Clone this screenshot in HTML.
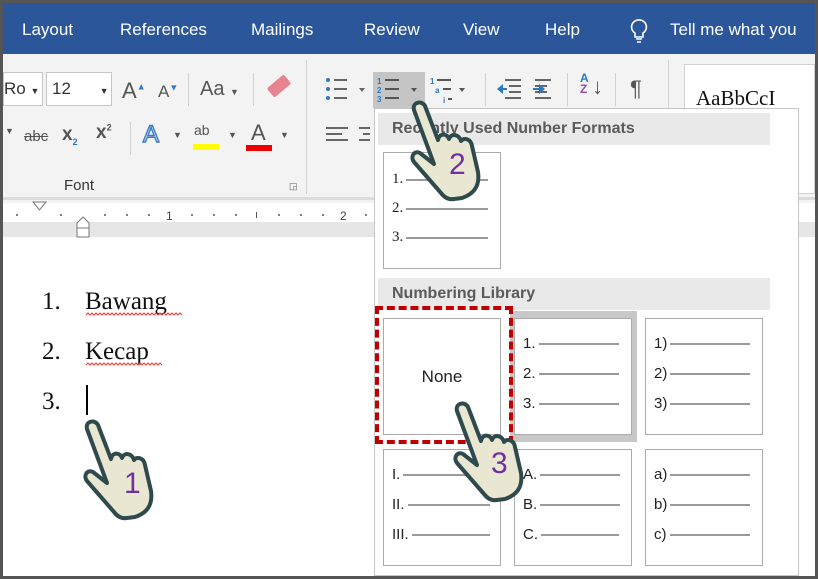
<!DOCTYPE html>
<html><head><meta charset="utf-8"><style>
*{margin:0;padding:0;box-sizing:border-box}
body{width:818px;height:579px;overflow:hidden;background:#555;position:relative;font-family:"Liberation Sans",sans-serif}
.a{position:absolute}
.tab{position:absolute;top:20px;color:#fff;font-size:17px}
.box{position:absolute;background:#fff;border:1px solid #ababab;width:118px;height:117px}
.row{position:absolute;left:8px;font-size:15px;color:#222;display:flex;align-items:center}
.row i{display:inline-block;height:2px;background:#9a9a9a;margin-left:3px}
.hdr{position:absolute;left:3px;width:392px;height:32px;background:#e9e9e9;color:#5a5a5a;font-weight:bold;font-size:16px;padding:7px 0 0 14px}
.g{color:#555;font-size:18px}
</style></head><body>
<div class="a" style="left:3px;top:3px;width:812px;height:573px;background:#f3f3f3"></div>
<div class="a" style="left:3px;top:3px;width:812px;height:51px;background:#2b579a"></div>
<div class="tab" style="left:22px">Layout</div>
<div class="tab" style="left:120px">References</div>
<div class="tab" style="left:251px">Mailings</div>
<div class="tab" style="left:364px">Review</div>
<div class="tab" style="left:463px">View</div>
<div class="tab" style="left:545px">Help</div>
<svg class="a" style="left:628px;top:18px" width="22" height="28"><path d="M11 2a7 7 0 0 0-4 13v4h8v-4a7 7 0 0 0-4-13zM8 21h6M9 24h4" stroke="#fff" stroke-width="1.6" fill="none"/></svg>
<div class="tab" style="left:670px">Tell me what you</div>

<!-- ribbon -->
<div class="a" style="left:3px;top:72px;width:40px;height:34px;background:#fff;border:1px solid #c6c6c6;font-size:17px;color:#333;padding:6px 0 0 0">Ro <span style="font-size:9px">▼</span></div>
<div class="a" style="left:46px;top:72px;width:66px;height:34px;background:#fff;border:1px solid #c6c6c6;font-size:17px;color:#333;padding:6px 0 0 5px">12 <span style="font-size:9px;margin-left:24px">▼</span></div>
<div class="a g" style="left:122px;top:78px;font-size:22px">A<sup style="font-size:9px;color:#2b79c2">▲</sup></div>
<div class="a g" style="left:158px;top:82px;font-size:17px">A<sup style="font-size:9px;color:#2b79c2">▼</sup></div>
<div class="a" style="left:188px;top:73px;width:1px;height:33px;background:#d0d0d0"></div>
<div class="a g" style="left:200px;top:78px;font-size:20px">Aa <span style="font-size:9px">▼</span></div>
<div class="a" style="left:253px;top:73px;width:1px;height:33px;background:#d0d0d0"></div>
<div class="a" style="left:268px;top:80px;width:22px;height:12px;background:#e8848f;transform:rotate(-40deg);border-radius:2px"></div>
<div class="a g" style="left:5px;top:126px;font-size:9px">▼</div>
<div class="a g" style="left:24px;top:128px;font-size:15px;text-decoration:line-through">abc</div>
<div class="a g" style="left:62px;top:124px;font-size:19px;font-weight:bold">x<sub style="font-size:9px;color:#2b79c2">2</sub></div>
<div class="a g" style="left:96px;top:122px;font-size:19px;font-weight:bold">x<sup style="font-size:9px">2</sup></div>
<div class="a" style="left:130px;top:122px;width:1px;height:33px;background:#d0d0d0"></div>
<div class="a" style="left:143px;top:121px;font-size:24px;color:#fff;-webkit-text-stroke:1.5px #3c7cc4">A</div>
<div class="a g" style="left:173px;top:130px;font-size:9px">▼</div>
<div class="a g" style="left:194px;top:122px;font-size:14px">ab</div>
<div class="a" style="left:193px;top:144px;width:26px;height:6px;background:#ffff00"></div>
<div class="a g" style="left:228px;top:130px;font-size:9px">▼</div>
<div class="a g" style="left:251px;top:120px;font-size:22px">A</div>
<div class="a" style="left:246px;top:145px;width:26px;height:6px;background:#e00"></div>
<div class="a g" style="left:280px;top:130px;font-size:9px">▼</div>
<div class="a" style="left:64px;top:177px;font-size:15px;color:#333">Font</div>
<div class="a" style="left:289px;top:181px;font-size:9px;color:#666">◲</div>
<div class="a" style="left:306px;top:60px;width:1px;height:134px;background:#d0d0d0"></div>
<!-- list buttons -->
<svg class="a" style="left:323px;top:76px" width="50" height="28"><g fill="#2b79c2"><circle cx="5" cy="4" r="2"/><circle cx="5" cy="13" r="2"/><circle cx="5" cy="22" r="2"/></g><g stroke="#666" stroke-width="2"><path d="M11 4h13M11 13h13M11 22h13"/></g><path d="M36 12l3 4 3-4z" fill="#666"/></svg>
<div class="a" style="left:373px;top:72px;width:52px;height:36px;background:#c5c5c5"></div>
<svg class="a" style="left:375px;top:76px" width="50" height="28"><g fill="#2b79c2" font-size="8" font-family="Liberation Sans" font-weight="bold"><text x="2" y="8">1</text><text x="2" y="17">2</text><text x="2" y="26">3</text></g><g stroke="#555" stroke-width="2"><path d="M10 4h14M10 13h14M10 22h14"/></g><path d="M36 12l3 4 3-4z" fill="#555"/></svg>
<svg class="a" style="left:429px;top:76px" width="50" height="30"><g fill="#2b79c2" font-size="8" font-family="Liberation Sans" font-weight="bold"><text x="1" y="8">1</text><text x="6" y="17">a</text><text x="14" y="27">i</text></g><g stroke="#555" stroke-width="2"><path d="M8 4h14M14 13h8M19 23h4"/></g><path d="M30 12l3 4 3-4z" fill="#555"/></svg>
<div class="a" style="left:485px;top:73px;width:1px;height:33px;background:#d0d0d0"></div>
<svg class="a" style="left:495px;top:76px" width="60" height="24"><g stroke="#666" stroke-width="2"><path d="M10 4h16M14 10h12M14 16h12M10 22h16M40 4h16M40 10h12M40 16h12M40 22h16"/></g><path d="M2 13l6-5v10zM50 13l-6-5v10z" fill="#2b79c2"/><path d="M4 13h8M38 13h8" stroke="#2b79c2" stroke-width="2"/></svg>
<div class="a" style="left:567px;top:73px;width:1px;height:33px;background:#d0d0d0"></div>
<div class="a" style="left:580px;top:73px;font-size:12px;line-height:11px;font-weight:bold"><span style="color:#2b79c2">A</span><br><span style="color:#8c4fb0">Z</span></div>
<div class="a g" style="left:592px;top:74px;font-size:22px">↓</div>
<div class="a" style="left:615px;top:73px;width:1px;height:33px;background:#d0d0d0"></div>
<div class="a g" style="left:630px;top:76px;font-size:22px">¶</div>
<div class="a" style="left:668px;top:60px;width:1px;height:134px;background:#d0d0d0"></div>
<div class="a" style="left:684px;top:64px;width:131px;height:130px;background:#fff;border:1px solid #d0d0d0"></div>
<div class="a" style="left:696px;top:86px;font-family:'Liberation Serif',serif;font-size:21px;color:#111">AaBbCcI</div>
<svg class="a" style="left:325px;top:125px" width="45" height="20"><g stroke="#666" stroke-width="2"><path d="M1 3h22M1 9h16M1 15h22M34 3h11M38 9h7M34 15h11"/></g></svg>

<!-- ruler -->
<div class="a" style="left:3px;top:197px;width:812px;height:3px;background:#dcdcdc"></div>
<div class="a" style="left:3px;top:203px;width:812px;height:19px;background:#fff"></div>
<div class="a" style="left:3px;top:222px;width:812px;height:15px;background:#e6e6e6"></div>
<div class="a" style="left:3px;top:237px;width:812px;height:339px;background:#fff"></div>
<svg class="a" style="left:0;top:203px" width="380" height="20"><g fill="#555"><circle cx="17" cy="12" r="1"/><circle cx="61" cy="12" r="1"/><circle cx="105" cy="12" r="1"/><circle cx="127" cy="12" r="1"/><circle cx="149" cy="12" r="1"/><circle cx="192" cy="12" r="1"/><circle cx="214" cy="12" r="1"/><circle cx="236" cy="12" r="1"/><rect x="256" y="9" width="1" height="6"/><circle cx="279" cy="12" r="1"/><circle cx="301" cy="12" r="1"/><circle cx="323" cy="12" r="1"/><circle cx="366" cy="12" r="1"/></g><text x="166" y="17" font-size="12" fill="#444" font-family="Liberation Sans">1</text><text x="340" y="17" font-size="12" fill="#444" font-family="Liberation Sans">2</text></svg>
<svg class="a" style="left:30px;top:201px" width="70" height="38"><path d="M3 1h13l-6.5 8z" fill="#fff" stroke="#777"/><path d="M47 22l6-6 6 6v14h-12z M47 27h12" fill="#fff" stroke="#777"/></svg>

<!-- document -->
<div class="a" style="left:42px;top:277px;font-family:'Liberation Serif',serif;font-size:25px;color:#111;line-height:50px">1.<br>2.<br>3.</div>
<div class="a" style="left:85px;top:277px;font-family:'Liberation Serif',serif;font-size:25px;color:#111;line-height:50px">Bawang<br>Kecap</div>
<svg class="a" style="left:86px;top:312px" width="96" height="6"><path d="M0 3 l2-2 2 2 2-2 2 2 2-2 2 2 2-2 2 2 2-2 2 2 2-2 2 2 2-2 2 2 2-2 2 2 2-2 2 2 2-2 2 2 2-2 2 2 2-2 2 2 2-2 2 2 2-2 2 2 2-2 2 2 2-2 2 2 2-2 2 2 2-2 2 2 2-2 2 2 2-2 2 2 2-2 2 2 2-2 2 2 2-2 2 2 2-2 2 2 2-2 2 2 2-2 2 2 2-2 2 2 2-2 2 2 2-2 2 2" stroke="#e33" stroke-width="1" fill="none"/></svg>
<svg class="a" style="left:86px;top:362px" width="76" height="6"><path d="M0 3 l2-2 2 2 2-2 2 2 2-2 2 2 2-2 2 2 2-2 2 2 2-2 2 2 2-2 2 2 2-2 2 2 2-2 2 2 2-2 2 2 2-2 2 2 2-2 2 2 2-2 2 2 2-2 2 2 2-2 2 2 2-2 2 2 2-2 2 2 2-2 2 2 2-2 2 2 2-2 2 2 2-2 2 2 2-2 2 2" stroke="#e33" stroke-width="1" fill="none"/></svg>
<div class="a" style="left:86px;top:385px;width:2px;height:30px;background:#000"></div>

<!-- dropdown -->
<div class="a" style="left:374px;top:108px;width:425px;height:468px;background:#fff;border:1px solid #c6c6c6">
 <div class="hdr" style="top:4px">Recently Used Number Formats</div>
 <div class="hdr" style="top:169px">Numbering Library</div>
</div>
<div class="box" style="left:383px;top:152px"><div class="row" style="top:18px;font-family:'Liberation Serif',serif">1.<i style="width:82px"></i></div><div class="row" style="top:47px;font-family:'Liberation Serif',serif">2.<i style="width:82px"></i></div><div class="row" style="top:76px;font-family:'Liberation Serif',serif">3.<i style="width:82px"></i></div></div>
<div class="box" style="left:383px;top:318px;font-size:17px;color:#222;text-align:center;padding-top:48px">None</div>
<div class="a" style="left:510px;top:311px;width:127px;height:131px;background:#c8c8c8"></div>
<div class="box" style="left:514px;top:318px"><div class="row" style="top:16px">1.<i style="width:80px"></i></div><div class="row" style="top:46px">2.<i style="width:80px"></i></div><div class="row" style="top:76px">3.<i style="width:80px"></i></div></div>
<div class="box" style="left:645px;top:318px"><div class="row" style="top:16px">1)<i style="width:80px"></i></div><div class="row" style="top:46px">2)<i style="width:80px"></i></div><div class="row" style="top:76px">3)<i style="width:80px"></i></div></div>
<div class="box" style="left:383px;top:449px"><div class="row" style="top:16px">I.<i style="width:86px"></i></div><div class="row" style="top:46px">II.<i style="width:82px"></i></div><div class="row" style="top:76px">III.<i style="width:78px"></i></div></div>
<div class="box" style="left:514px;top:449px"><div class="row" style="top:16px">A.<i style="width:80px"></i></div><div class="row" style="top:46px">B.<i style="width:80px"></i></div><div class="row" style="top:76px">C.<i style="width:78px"></i></div></div>
<div class="box" style="left:645px;top:449px"><div class="row" style="top:16px">a)<i style="width:80px"></i></div><div class="row" style="top:46px">b)<i style="width:80px"></i></div><div class="row" style="top:76px">c)<i style="width:80px"></i></div></div>
<div class="a" style="left:375px;top:306px;width:138px;height:138px;border:4px dashed #c00000"></div>

<!-- hands -->
<svg width="0" height="0" style="position:absolute"><defs><path id="h" d="M6,10 C4,2 14,0 17,6 L30,40 C31,33 39,33 41,39 C43,33 51,34 53,41 C56,37 63,39 64,46 L70,72 C72,86 66,94 54,98 L46,99 C40,100 36,97 33,93 L6,62 C2,57 6,50 12,53 L26,64 Z"/></defs></svg>
<svg class="a" style="left:81px;top:419px" width="80" height="106"><use href="#h" fill="#e9e6d1" stroke="#2f4a4d" stroke-width="4" stroke-linejoin="round"/><text x="43" y="74" font-size="30" fill="#7030a0" font-family="Liberation Sans">1</text></svg>
<svg class="a" style="left:408px;top:100px" width="80" height="106"><use href="#h" fill="#e9e6d1" stroke="#2f4a4d" stroke-width="4" stroke-linejoin="round"/><text x="41" y="74" font-size="30" fill="#7030a0" font-family="Liberation Sans">2</text></svg>
<svg class="a" style="left:451px;top:401px" width="80" height="106"><use href="#h" fill="#e9e6d1" stroke="#2f4a4d" stroke-width="4" stroke-linejoin="round"/><text x="40" y="72" font-size="30" fill="#7030a0" font-family="Liberation Sans">3</text></svg>
</body></html>
